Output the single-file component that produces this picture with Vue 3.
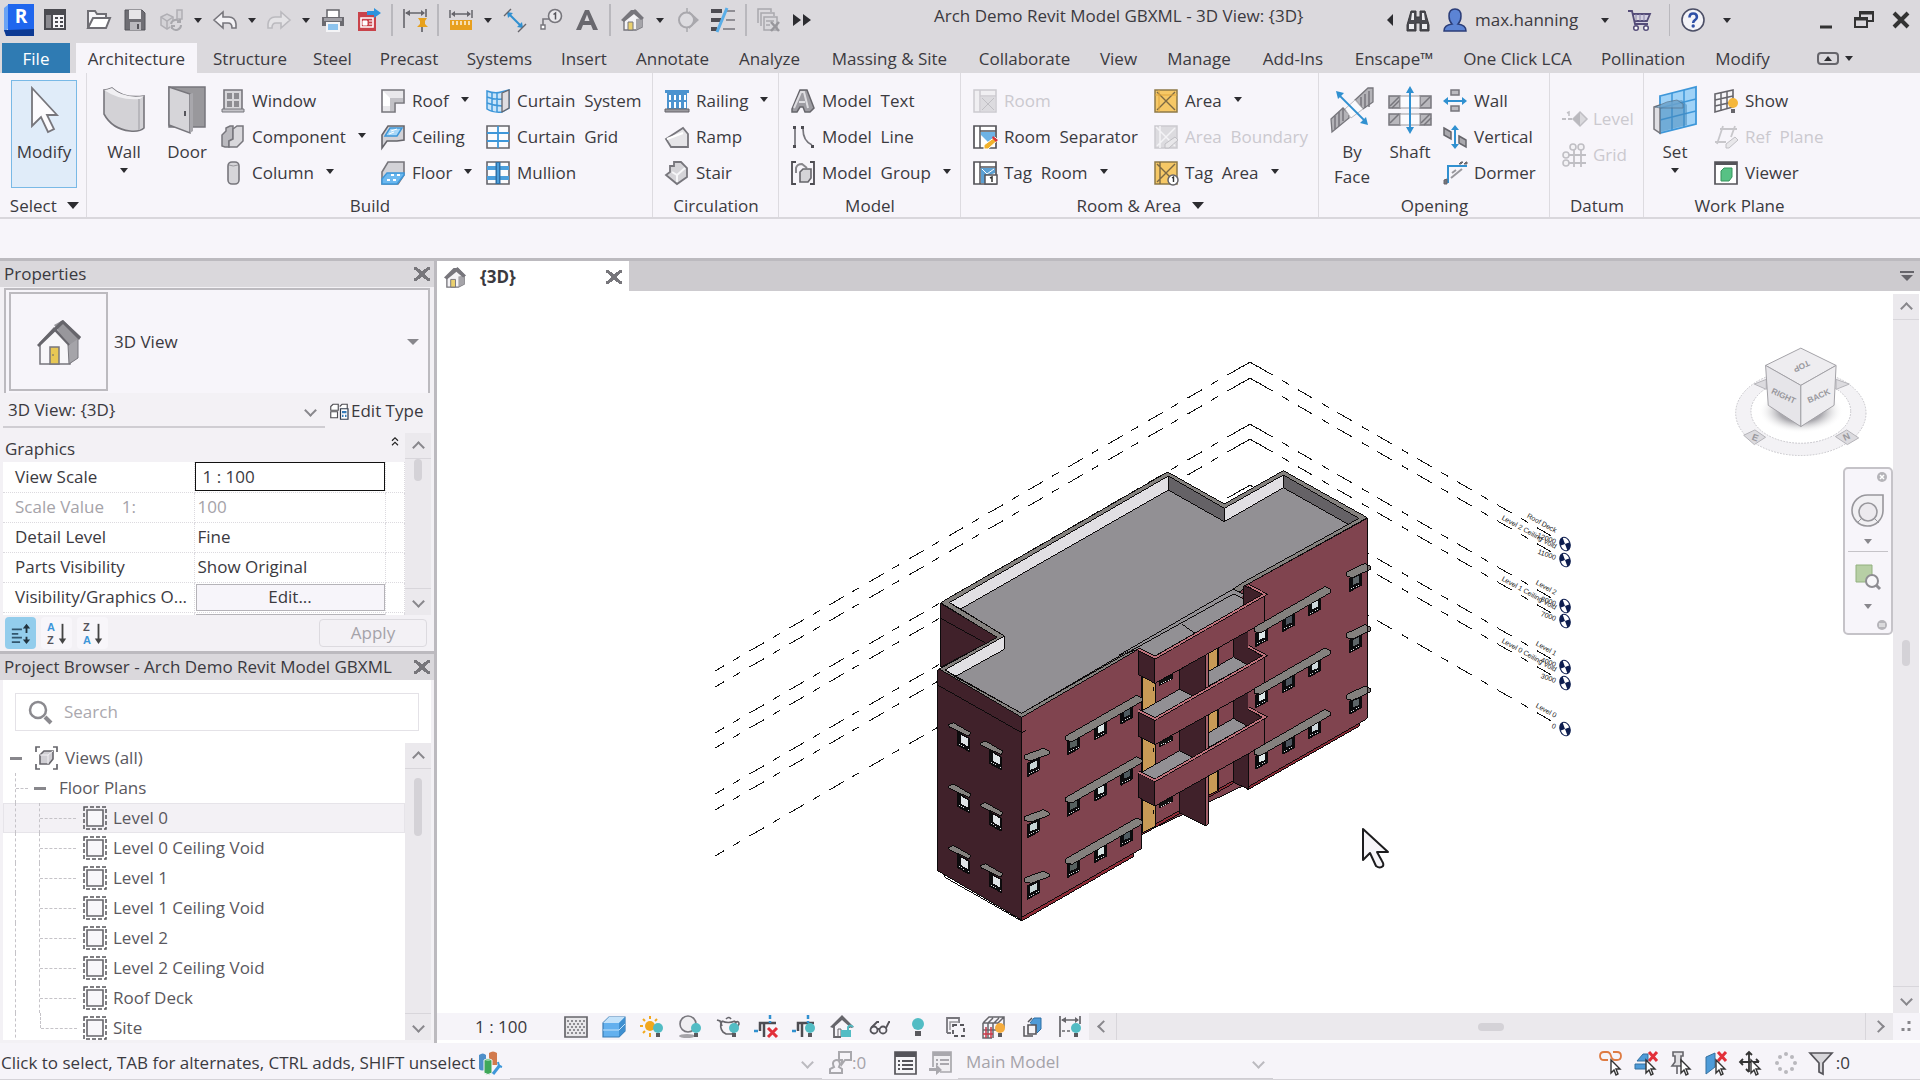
<script setup>
import { ref } from 'vue'

const icons = {
    ui: '<path d="M2 2h20v19H2z" fill="#f6f5f8" stroke="#4a4a50" stroke-width="2"/><path d="M2 2h20v5H2z" fill="#4a4a50"/><path d="M3 7h6v13H3z" fill="#8b8a90"/><path d="M9 7v14M12 10h3m2 0h3M12 14h3m2 0h3M12 18h3m2 0h3" stroke="#4a4a50" stroke-width="2"/>',
    open: '<path d="M1 20V3h7l2 3h9v5" fill="#f6f5f8" stroke="#6f6e74" stroke-width="2"/><path d="M1 20l5-10h17l-4 10z" fill="#fff" stroke="#6f6e74" stroke-width="2"/>',
    save: '<path d="M2 2h17l3 3v17H2z" fill="#6f6e74" stroke="#55545a"/><path d="M6 2h12v9H6z" fill="#e6e5e8"/><path d="M7 14h11v8H7z" fill="#b9b8bd"/><path d="M14 16h2v5h-2z" fill="#55545a"/>',
    sync: '<g fill="#d4d3d7" stroke="#b0afb4" stroke-width="1.5"><path d="M2 9l6-3 6 3v8l-6 4-6-4z"/><path d="M2 9l6 4 6-4M8 13v8"/><path d="M18 2h5v9h-5z"/></g><circle cx="17" cy="17" r="6" fill="#dbd9dd"/><path d="M12 16a5 5 0 019-2m1 3a5 5 0 01-9 3m8-9v3h-3m-5 7v-3h3" fill="none" stroke="#a9a8ad" stroke-width="2"/>',
    undo: '<path d="M1 12l9-8v5h6q6 0 7 7v4h-4q0-5-4-5h-5v5z" fill="#f3f2f5" stroke="#77767c" stroke-width="1.6"/>',
    redo: '<path d="M23 12l-9-8v5H8q-6 0-7 7v4h4q0-5 4-5h5v5z" fill="#e4e3e6" stroke="#bbbabf" stroke-width="1.6"/>',
    print: '<path d="M6 2h12v8H6z" fill="#fff" stroke="#66656b" stroke-width="1.5"/><path d="M1 9h22v9H1z" fill="#6b6a70"/><path d="M3 10h18v3H3z" fill="#a2a1a7"/><path d="M6 15h12v8H6z" fill="#8cc3ee" stroke="#f4f4f6" stroke-width="2"/>',
    pdf: '<path d="M1 4h18v19H1z" fill="#c9434a"/><path d="M4 10h12v9H4z" fill="none" stroke="#fff" stroke-width="1.6"/><path d="M6 13h4v4H6zM12 13h3M12 16h3" fill="#fff" stroke="#fff"/><path d="M10 3h7V0l7 5-7 5V7h-7z" fill="#2e93dc"/>',
    pinDim: '<path d="M1 1v19M23 1v8M3 5h18" stroke="#66656b" stroke-width="1.6"/><path d="M7 2L2 5l5 3zM18 2l4 3-4 3z" fill="#66656b"/><path d="M15 10h9l-2 3v3l3 3H14l3-3v-3z" fill="#e7a11c"/><path d="M19 19v5" stroke="#55545a" stroke-width="1.5"/>',
    measure: '<path d="M1 2v8M23 2v8M3 6h18" stroke="#66656b" stroke-width="1.5"/><path d="M6 3L2 6l4 3zM18 3l4 3-4 3z" fill="#66656b"/><path d="M1 12h22v10H1z" fill="#e8a01f"/><path d="M4 13v4m4-4v4m4-4v4m4-4v4m4-4v4" stroke="#fff" stroke-width="1.3"/>',
    alignDim: '<path d="M5 5l14 14" stroke="#3090d0" stroke-width="2"/><path d="M4 4l6 1-5 5zM20 20l-6-1 5-5z" fill="#3090d0"/><path d="M1 8l7-7M15 24l8-8" stroke="#66656b" stroke-width="1.4"/>',
    tag: '<circle cx="16" cy="8" r="6.5" fill="#eae9ec" stroke="#77767c" stroke-width="1.6"/><path d="M14.500 6.500l2-1.500v6.500" fill="none" stroke="#55545a" stroke-width="1.5"/><path d="M10 11H4v7" fill="none" stroke="#77767c" stroke-width="1.6"/><path d="M2 17h4v4H2z" fill="#fff" stroke="#77767c" stroke-width="1.4"/>',
    letterA: '<path d="M1 22L10 2h4l9 20h-5l-2-5H8l-2 5zM9.500 13h5L12 6.500z" fill="#69686e"/>',
    house: '<path d="M3 12v10h12l6-3V10l-7-8z" fill="#f4f3f6" stroke="#77767c" stroke-width="1.400"/><path d="M15 22V11l6-1v9z" fill="#a5a4a9"/><path d="M0 12L10 2h5l8 8-3 2-6-5-1-1-10 8z" fill="#77767c"/><path d="M7 14h5v8H7z" fill="#ead06f" stroke="#77767c"/>',
    section: '<path d="M12 0v24" stroke="#a9a8ad" stroke-width="1.5"/><path d="M14 3l10 9-10 9z" fill="#a9a8ad"/><circle cx="11.500" cy="12" r="7.500" fill="#dddce0" stroke="#a9a8ad" stroke-width="2"/>',
    thin: '<path d="M0 3h11M0 12h10M0 21h6" stroke="#4d4c52" stroke-width="4"/><path d="M16 3h8M15 12h9M12 21h12" stroke="#77767c" stroke-width="1.4"/><path d="M16 0L6 24" stroke="#5aaee8" stroke-width="3"/>',
    closeWin: '<path d="M1 15V1h13v3M4 18V5h13v3" fill="none" stroke="#a9a8ad" stroke-width="1.5"/><path d="M7 9h13v13H7z" fill="#d9d8dc" stroke="#a9a8ad" stroke-width="1.5"/><path d="M9 13h8M9 17h4" stroke="#a9a8ad" stroke-width="1.5"/><path d="M14 14l8 9m0-9l-8 9" stroke="#98979c" stroke-width="2.500"/>',
    more: '<path d="M0 6l8 6-8 6zM10 6l8 6-8 6z" fill="#2c2c30"/>',
    binoculars: '<path d="M5 3h5v6h4V3h5l4 14v6h-9v-8h-4v8H1v-6z" fill="#4a4a50" stroke="#3a3a3e" /><path d="M3 16h5v5H3zM16 16h5v5h-5zM6 5h2v7H5zM16 5h2l1 7h-3z" fill="#ededf0"/>',
    user: '<path d="M1 23q0-6 8-7-3-3-3-8 0-7 6-7t6 7q0 5-3 8 8 1 8 7z" fill="#5c84d4" stroke="#2b3d78" stroke-width="1.500"/>',
    cart: '<path d="M1 3h4l3 13h13M6 6h17l-3 7H8" fill="#d3d0e2" stroke="#544c78" stroke-width="1.8"/><path d="M9 6v7m4-7v7m4-7v7" stroke="#8c86ab"/><circle cx="9" cy="20" r="2.300" fill="#fff" stroke="#544c78" stroke-width="1.500"/><circle cx="19" cy="20" r="2.300" fill="#fff" stroke="#544c78" stroke-width="1.500"/>',
    help: '<circle cx="12" cy="12" r="11" fill="#f3f3f8" stroke="#4c4f66" stroke-width="1.600"/><path d="M8.500 9.500q0-4 3.700-4t3.700 3.500q0 2-2 3.200-1.700 1-1.700 2.800" fill="none" stroke="#2e4fa6" stroke-width="2.600"/><circle cx="12.200" cy="18" r="1.700" fill="#2e4fa6"/>',
    window: '<path d="M3 1h18v20H3z" fill="#d8d7db" stroke="#77767c" stroke-width="1.600"/><path d="M6 4h5v6H6zm7 0h5v6h-5zM6 12h5v6H6zm7 0h5v6h-5z" fill="#8e8d92"/><path d="M1 20h22v3H1z" fill="#c4c3c8" stroke="#77767c"/>',
    component: '<path d="M1 21V10l4-4V3l4-2h3v13l-4 2v6H4z" fill="#bbbabf" stroke="#77767c" stroke-width="1.500"/><path d="M12 14V4l4-3h6v15l-6 6H8v-6z" fill="#d9d8dc" stroke="#77767c" stroke-width="1.500"/>',
    column: '<rect x="7" y="1" width="11" height="22" rx="4" fill="#d6d5d9" stroke="#77767c" stroke-width="1.600"/><path d="M8 4q4 2 9 0" fill="none" stroke="#98979c"/>',
    roof: '<path d="M1 1h22v13h-9v9H1z" fill="#e9e8eb"/><path d="M1 1l8 8v8h-8zM23 1L9 9" fill="#fff"/><path d="M11 22V11h11" fill="none" stroke="#c2c1c6" stroke-width="4"/><path d="M1 1h22v13h-9v9H1z" fill="none" stroke="#77767c" stroke-width="1.600"/>',
    ceiling: '<path d="M7 1h16v14l-7 1H6l-5 7V10z" fill="#d3d2d7" stroke="#66656b" stroke-width="1.600"/><path d="M9 3h12l-5 8H4z" fill="#a9d8f8" stroke="#3e97d9" stroke-width="1.500"/><path d="M10 6l6-2M8 9l5-2" stroke="#fff"/>',
    floor: '<path d="M7 1h16v13l-6 9H1V11z" fill="#d3d2d7" stroke="#77767c" stroke-width="1.600"/><path d="M6 12h17v2l-7 9H1v-5z" fill="#6cb8ef" stroke="#3e97d9" stroke-width="1.500"/><path d="M10 14h3m3 0h3M6 19h3m3 0h3" stroke="#fff" stroke-width="2"/>',
    curtainSystem: '<path d="M1 2q8 3 14 1l8-2v18l-7 4q-9 1-15-3z" fill="#c9e5fa" stroke="#3e97d9" stroke-width="1.500"/><path d="M6 4v18M11 4v19M1 8q8 3 15 2M1 14q8 3 15 3" fill="none" stroke="#3e97d9" stroke-width="1.500"/><path d="M16 4l7-3v18l-7 4z" fill="#dedde1" stroke="#66656b" stroke-width="1.300"/>',
    curtainGrid: '<path d="M1 1h22v22H1z" fill="#fbfbfd" stroke="#66656b" stroke-width="1.600"/><path d="M12 1v22M1 8h22M1 16h22" stroke="#3e97d9" stroke-width="1.800"/>',
    mullion: '<path d="M1 1h22v22H1z" fill="#fbfbfd" stroke="#66656b" stroke-width="1.600"/><path d="M1 7h22M1 17h22" stroke="#4b9fdc" stroke-width="4"/><path d="M12 1v22" stroke="#2f6fa5" stroke-width="5"/><path d="M12 2v20" stroke="#4b9fdc" stroke-width="2"/>',
    railing: '<path d="M0 1h24v3H0zM2 4h20v16H2z" fill="#4b93cf"/><path d="M4 6h2v5H4zm5 0h2v5H9zm5 0h2v5h-2zm5 0h2v5h-2zM4 13h2v6H4zm5 0h2v6H9zm5 0h2v6h-2zm5 0h2v6h-2z" fill="#fff"/><path d="M0 20h24v3H0z" fill="#99989d" stroke="#66656b"/>',
    ramp: '<path d="M1 14L18 3l5 6v13H6z" fill="#e6e5e8" stroke="#77767c" stroke-width="1.800"/><path d="M2 14l16-6" stroke="#fff" stroke-width="2"/>',
    stair: '<path d="M5 5h4V1h7l6 6v9l-10 7-11-9 4-3z" fill="#d5d4d8" stroke="#77767c" stroke-width="1.800"/><path d="M7 11l5 3 8-7M12 14v7" fill="none" stroke="#f6f6f8" stroke-width="2"/>',
    modelText: '<path d="M1 20L9 1h7l7 18-4 4h-5l-2-5H9l-3 5H1z" fill="#9d9ca2" stroke="#66656b" stroke-width="1.500"/><path d="M3 19l7-16h3l4 16M8 13h6" fill="none" stroke="#dedde1" stroke-width="2"/>',
    modelLine: '<path d="M4 4v16M12 4q0 12 9 16" fill="none" stroke="#77767c" stroke-width="1.700"/><path d="M2 1h3v3H2zM10 1h3v3h-3zM2 20h3v3H2zM20 20h3v3h-3z" fill="#4d4c52"/>',
    modelGroup: '<path d="M5 1H1v22h4M19 1h4v22h-4" fill="none" stroke="#4d4c52" stroke-width="1.800"/><path d="M5 12V7q1-4 6-4l5 4" fill="none" stroke="#88878c" stroke-width="2"/><path d="M9 11l3-3h8v9l-3 4H9z" fill="#d5d4d8" stroke="#66656b" stroke-width="1.600"/>',
    roomOff: '<path d="M1 1h22v22H1z" fill="#f0eff2" stroke="#cbcacf" stroke-width="1.500"/><path d="M7 1v22M7 7h16" stroke="#cbcacf" stroke-width="1.500"/><path d="M8 8h14v14H8z" fill="#dcdbdf"/><path d="M9 9l12 12M21 9L9 21" stroke="#c0bfc4"/>',
    roomSep: '<path d="M1 1h22v22H1z" fill="#fff" stroke="#55545a" stroke-width="1.700"/><path d="M7 1v22M7 6h16" stroke="#55545a" stroke-width="1.500"/><path d="M8 7h14v6l-6 5-8-8z" fill="#6db3e6"/><path d="M22 12l3 3-10 9h-4v-4z" fill="#f1b12d" stroke="#fff"/><path d="M20 11l5 4-2 2-4-4z" fill="#d9343b"/>',
    tagRoom: '<path d="M1 1h22v22H1z" fill="#fff" stroke="#55545a" stroke-width="1.700"/><path d="M7 1v22M7 6h16" stroke="#55545a" stroke-width="1.500"/><path d="M8 7h14v5l-8 3v7H8z" fill="#5b9fd2"/><path d="M9 8l5 5 7-5" stroke="#fff" fill="none"/><path d="M12 14h12v9H12z" fill="#fff" stroke="#55545a" stroke-width="1.500"/><path d="M17 17l2-1v5" fill="none" stroke="#333" stroke-width="1.500"/>',
    area: '<path d="M1 1h22v22H1z" fill="#f6c866" stroke="#8f7a48" stroke-width="1.500"/><path d="M3 3l18 18M21 3L3 21" stroke="#7d6a45" stroke-width="1.400"/><path d="M5 1v22M1 6h22" stroke="#e0a63c"/>',
    areaOff: '<path d="M1 1h22v22H1z" fill="#dcdbdf" stroke="#cbcacf" stroke-width="1.500"/><path d="M2 2l19 19M21 3L3 21M6 1v22" stroke="#f4f3f6" stroke-width="1.500"/><path d="M21 12l3 3-9 8h-4v-4z" fill="#e8e7ea" stroke="#c0bfc4"/>',
    tagArea: '<path d="M1 1h22v22H1z" fill="#f6c866" stroke="#8f7a48" stroke-width="1.500"/><path d="M3 3l18 18M21 3L3 21M6 1v22" stroke="#7d6a45" stroke-width="1.400"/><circle cx="19" cy="19" r="5" fill="#fff" stroke="#66656b" stroke-width="1.500"/><path d="M18 17l1.500-1v5" fill="none" stroke="#333" stroke-width="1.400"/>',
    openWall: '<path d="M8 1h8v5H8zM8 17h8v5H8z" fill="#bcbbc0" stroke="#77767c" stroke-width="1.500"/><path d="M3 12h18" stroke="#3090d0" stroke-width="2"/><path d="M0 12l5-4v8zM24 12l-5-4v8z" fill="#3090d0"/>',
    openVertical: '<path d="M1 3l7 4v7l-7-4zM16 11l7 4v7l-7-4z" fill="#a9a8ad" stroke="#66656b" stroke-width="1.500"/><path d="M12 3v18" stroke="#3090d0" stroke-width="2"/><path d="M12 0l4 5H8zM12 24l4-5H8z" fill="#3090d0"/>',
    dormer: '<path d="M5 22V5h19" fill="none" stroke="#3090d0" stroke-width="2"/><path d="M1 19v4h3v-5zM16 3l2-2h2l-2 2zM21 3l2-2h1v2z" fill="#77767c" stroke="#66656b"/><path d="M8 17L19 8M9 12l4-3" stroke="#99989d" stroke-width="2"/>',
    level: '<path d="M0 12h4m2 0h4" stroke="#c0bfc4" stroke-width="2"/><path d="M5 6l2-1v4" fill="none" stroke="#c0bfc4" stroke-width="1.500"/><path d="M18 5l7 7-7 7-7-7z" fill="#dad9dd" stroke="#c0bfc4" stroke-width="1.500"/><path d="M18 5v14l-7-7z" fill="#bab9be"/>',
    grid: '<path d="M7 12h17M7 20h17M12 7v17M19 7v17" stroke="#c0bfc4" stroke-width="1.800"/><g fill="#f3f2f5" stroke="#c0bfc4" stroke-width="1.600"><circle cx="11" cy="4" r="3"/><circle cx="19" cy="4" r="3"/><circle cx="4" cy="12" r="3"/><circle cx="4" cy="20" r="3"/></g>',
    show: '<path d="M1 5l18-4v17L1 23z" fill="#f6f5f8" stroke="#66656b" stroke-width="1.600"/><path d="M7 3v19M13 2v18M1 11l18-4M1 17l18-4" stroke="#66656b" stroke-width="1.500"/><circle cx="19" cy="14" r="5" fill="#f5b73c"/><path d="M17 20h4v4h-4z" fill="#66656b"/>',
    refPlane: '<path d="M6 4h17M9 1L3 19M21 1l-4 11M1 17h11" fill="none" stroke="#c8c7cb" stroke-width="1.800"/><path d="M21 12l3 3-9 8h-3v-4z" fill="#e8e7ea" stroke="#c0bfc4"/>',
    viewer: '<path d="M1 1h22v22H1z" fill="#fff" stroke="#55545a" stroke-width="1.700"/><path d="M1 1h22v3H1z" fill="#55545a"/><path d="M7 10l3-3h8v9l-3 4H7z" fill="#57c184" stroke="#36935d"/>',
    editType: '<path d="M1 6l3-3h7v8H1zM13 6l3-3h7v8M1 13h9v8H1z" fill="#fff" stroke="#4d4c52" stroke-width="1.500"/><path d="M14 9h10v14H14z" fill="#fff" stroke="#2f3a4a" stroke-width="1.600"/><path d="M16 12h6v3h-6zM16 17h2v3h-2zm4 0h2v3h-2z" fill="#347ab8"/>',
    group: '<path d="M2 8h11M2 13h7M2 17h11M2 22h9" stroke="#33566d" stroke-width="2"/><path d="M18 6v6M18 16v5" stroke="#22333f" stroke-width="2"/><path d="M18 2l4 5h-8zM18 24l4-5h-8z" fill="#22333f"/>',
    grain: '<path d="M1 2h22v20H1z" fill="#e8e7ea" stroke="#66656b" stroke-width="1.700"/><path d="M3 5h2v2H3zm4 0h2v2H7zm4 0h2v2h-2zm4 0h2v2h-2zm4 0h2v2h-2zM5 8h2v2H5zm4 0h2v2H9zm4 0h2v2h-2zm4 0h2v2h-2zM3 11h2v2H3zm4 0h2v2H7zm4 0h2v2h-2zm4 0h2v2h-2zm4 0h2v2h-2zM5 14h2v2H5zm4 0h2v2H9zm4 0h2v2h-2zm4 0h2v2h-2zM3 17h2v2H3zm4 0h2v2H7zm4 0h2v2h-2zm4 0h2v2h-2zm4 0h2v2h-2z" fill="#8e8d92"/>',
    style: '<path d="M1 8l6-6h16v14l-6 6H1z" fill="#63b0ee" stroke="#3a7cb5" stroke-width="1.200"/><path d="M1 8l6-6h16l-6 6z" fill="#c3e2fa"/><path d="M17 8l6-6v14l-6 6z" fill="#3f8fd0"/><path d="M1 15h16l6-6" fill="none" stroke="#c3e2fa"/>',
    sun: '<circle cx="10" cy="11" r="5" fill="#f2a81d"/><path d="M10 1v3M10 18v4M0 11h3M3 4l2 2M17 4l-2 2M3 18l2-2" stroke="#f2a81d" stroke-width="2"/>',
    shadow: '<ellipse cx="9" cy="21" rx="8" ry="2" fill="#a5a4a9"/><circle cx="10" cy="9" r="8" fill="#efeef1" stroke="#77767c" stroke-width="1.600"/>',
    teapot: '<path d="M6 6q-3 6 1 11l3 2h6q4-3 4-9l-1-4M6 6q6 3 13 0M10 4q3-3 5 0M6 11L4 6 1 5M19 8q4-3 4 1l-3 5" fill="none" stroke="#66656b" stroke-width="1.700"/>',
    crop: '<path d="M6 16V8h16M10 8v14" fill="none" stroke="#4d4c52" stroke-width="2.500"/><path d="M16 0v4M0 16h4M16 6v2" stroke="#3090d0" stroke-width="2.500"/>',
    redX: '<path d="M14 13l9 9m0-9l-9 9" stroke="#e2303a" stroke-width="3"/>',
    bulb: '<circle cx="18" cy="13" r="5" fill="#52bcc4"/><path d="M16 18h4v4h-4z" fill="#5a595e"/>',
    orangeBulb: '<circle cx="18" cy="13" r="5" fill="#f5ac3d"/><path d="M16 18h4v4h-4z" fill="#5a595e"/>',
    lockHouse: '<path d="M4 11v11h7M19 10v3" fill="none" stroke="#66656b" stroke-width="1.800"/><path d="M8 14h3v8H8z" fill="none" stroke="#66656b"/><path d="M0 12L12 0l12 12-3 1-9-8-9 8z" fill="#66656b"/><path d="M11 15h10v7H11z" fill="#52bcc4"/><path d="M18 15v-3q2-3 5 0" fill="none" stroke="#52bcc4" stroke-width="2"/>',
    glasses: '<g fill="none" stroke="#55545a" stroke-width="1.800"><circle cx="6" cy="15" r="3.500"/><circle cx="15" cy="15" r="3.500"/><path d="M9 14h3M3 13l6-6h2M18 13l3-6h1"/></g>',
    bigBulb: '<circle cx="12" cy="9" r="6" fill="#52bcc4"/><path d="M9 16h6v5H9z" fill="#5a595e"/>',
    displaced: '<path d="M3 18V3h12v5M3 18h4" fill="none" stroke="#77767c" stroke-width="1.800"/><path d="M6 15V7h9" fill="none" stroke="#99989d" stroke-width="1.500"/><path d="M9 10h11v11H9z" fill="none" stroke="#55545a" stroke-width="1.800" stroke-dasharray="4 3"/>',
    gridBulb: '<path d="M1 8l6-6h15v11M1 8v15h9M1 8h15l6-6M6 8v15M11 8v15M1 15h15M16 8v6M11 3l-5 5M17 3l-5 5" fill="none" stroke="#66656b" stroke-width="1.500"/><path d="M4 12v11M9 12v11M1 19h10" stroke="#c8394a" stroke-width="1.500"/>',
    highlight: '<path d="M10 8l4-5h7v11l-4 4" fill="#4e9bd8" stroke="#2c6ea5"/><path d="M8 10h8v9H8z" fill="#f4f3f6" stroke="#55545a" stroke-width="1.600"/><path d="M4 11v10h9M8 7l4-4" fill="none" stroke="#55545a" stroke-width="1.500"/>',
    constraint: '<path d="M2 1v21M22 1v8M4 5h16" stroke="#66656b" stroke-width="1.700"/><path d="M8 2L3 5l5 3zM17 2l4 3-4 3z" fill="#66656b"/><path d="M4 16h10" stroke="#66656b" stroke-width="1.700" stroke-dasharray="3 2"/>',
    worksets: '<path d="M1 4q4-3 7 0v14q-4 3-7 0z" fill="#4e8fc9"/><path d="M11 2q4-3 8 0v12h-8z" fill="#d27a4d"/><path d="M6 9q4-3 8 0v13q-4 3-8 0z" fill="#3fa85a" stroke="#f6f4f9"/><path d="M7 9q3-2 6 0-3 2-6 0z" fill="#8fd3a2"/><path d="M22 14l-7 9" stroke="#3e97d9" stroke-width="3"/><path d="M20 11l1 4 3 1" fill="none" stroke="#3e97d9" stroke-width="2"/>',
    requests: '<path d="M11 1h12v8h-6l-3 4V9h-3zM2 22v-4l4-2q-2-4 0-6 3-2 5 0 2 3 0 6l3 2v4z" fill="none" stroke="#a9a8ad" stroke-width="2"/>',
    list: '<path d="M2 1h21v22H2z" fill="#f6f5f8" stroke="#55545a" stroke-width="1.700"/><path d="M2 1h21v5H2z" fill="#55545a"/><path d="M5 10h2m2 0h11M5 14h2m2 0h11M5 18h2m2 0h11" stroke="#55545a" stroke-width="2"/>',
    listOff: '<path d="M5 16V1h18v20H12" fill="#f0eff2" stroke="#a9a8ad" stroke-width="1.700"/><path d="M5 1h18v4H5z" fill="#a9a8ad"/><path d="M8 9h2m2 0h9M8 13h2m2 0h9" stroke="#a9a8ad" stroke-width="2"/><path d="M1 17h7v-4l6 6-6 5v-4H1z" fill="#a9a8ad"/>',
    selLink: '<path d="M9 9H5q-4 0-4-4t4-4h3q3 0 4 4t4 4h2q4 0 4-4t-4-4h-4" fill="none" stroke="#de7b42" stroke-width="1.800"/>',
    selUnder: '<path d="M3 10l6-7h5v7zM1 13h14v5H1z" fill="#4e9bd8" stroke="#35719f"/><path d="M15 1l8 9m0-9l-8 9" stroke="#e2303a" stroke-width="3"/>',
    selPin: '<path d="M4 1h10v4h-2v6l3 4H3l3-4V5H4zM8 15v8" fill="#e0dfe3" stroke="#66656b" stroke-width="1.600"/>',
    selFace: '<path d="M2 6l9-4v14l-9 7z" fill="#4e9bd8" stroke="#35719f"/><path d="M14 1l8 9m0-9l-8 9" stroke="#e2303a" stroke-width="3"/>',
    selDrag: '<path d="M10 1v20M1 11h19M7 4l3-3 3 3M7 18l3 3M4 8l-3 3 3 3M17 8l3 3" fill="none" stroke="#333" stroke-width="1.800"/>',
    pointer: '<path d="M12 9v13l3-3 2 5 2-1-2-5h4z" fill="#fff" stroke="#333" stroke-width="1.400"/>',
    spinner: '<g fill="#b9b8bd"><circle cx="12" cy="3" r="2"/><circle cx="18" cy="6" r="2"/><circle cx="21" cy="12" r="2"/><circle cx="18" cy="18" r="2"/><circle cx="12" cy="21" r="2"/><circle cx="6" cy="18" r="2"/><circle cx="3" cy="12" r="2"/><circle cx="6" cy="6" r="2"/></g>',
    filter: '<path d="M1 2h22l-9 10v11l-4-2v-9z" fill="#d8d7db" stroke="#55545a" stroke-width="1.700"/>',
    views: '<path d="M5 1H1v5M18 1h4v5M5 23H1v-5M18 23h4v-5" fill="none" stroke="#66656b" stroke-width="1.700"/><path d="M5 9l4-4h9v8l-4 5H5z" fill="#d0cfd4" stroke="#66656b" stroke-width="1.600"/><path d="M5 9h8v9M13 9l5-4" fill="none" stroke="#f3f2f5"/>',
    plan: '<path d="M1 1h22v22H1z" fill="none" stroke="#55545a" stroke-width="1.500" stroke-dasharray="4 2"/><path d="M4 4h16v16H4z" fill="#f8f7fa" stroke="#66656b" stroke-width="1.600"/>',
    search: '<circle cx="10" cy="10" r="8" fill="none" stroke="#8b8a8f" stroke-width="2.500"/><path d="M17 17l6 6" stroke="#8b8a8f" stroke-width="4"/>',
}

const bigIcons = {
    modify: '<path d="M10 2v38l9-9 7 15 6-3-7-14h10z" fill="#fcfbfe" stroke="#77767c" stroke-width="1.800"/>',
    wall: '<path d="M2 4q3 0 8-2 12 11 32 8v32q-4 4-14 3Q10 43 2 28z" fill="#d3d2d6" stroke="#77767c" stroke-width="1.600"/><path d="M2 4q3 0 8-2 12 11 32 8l-4 3Q18 15 2 4z" fill="#f1f0f3"/><path d="M37 13v31" stroke="#b8b7bc" stroke-width="2"/>',
    door: '<path d="M4 1h36v40H4z" fill="#99989c" stroke="#77767c" stroke-width="1.500"/><path d="M4 1l21 7v39L4 39z" fill="#d6d5d9" stroke="#77767c" stroke-width="1.500"/><path d="M25 8l3-1v38l-3 2z" fill="#a8a7ac"/><path d="M20 25v5" stroke="#55545a" stroke-width="2"/>',
    byFace: '<path d="M1 33l12-11 6 6v4L2 46zM25 14L38 2h5v14L33 23z" fill="#b4b3b8" stroke="#77767c" stroke-width="1.300"/><path d="M5 30v13m4-17v14m4-17v12m18-24v11m4-14v14m4-17v16" stroke="#77767c" stroke-width="1.500"/><path d="M15 23l10-9 8 9-12 9z" fill="#fbfafd" stroke="#bbbabf"/><path d="M8 8l28 28" stroke="#3090d0" stroke-width="1.800"/><path d="M6 5l8 2-6 6zM38 39l-8-2 6-6z" fill="#3090d0"/>',
    shaft: '<g fill="#b9b8bd" stroke="#77767c" stroke-width="1.500"><path d="M1 10h11v12H1zM32 10h11v12H32zM1 28h11v11H1zM32 28h11v11H32z"/><path d="M2 20L11 11M4 22l8-8M33 20l9-9M2 37l9-9M33 37l9-9M36 39l7-7"/></g><path d="M12 10h20v12H12zM12 28h20v11H12z" fill="#fbfafd" stroke="#99989d"/><path d="M22 4v40" stroke="#3090d0" stroke-width="2"/><path d="M22 0l4 7h-8zM22 48l4-7h-8z" fill="#3090d0"/>',
    setPlane: '<path d="M7 10l36-9v37L7 47z" fill="#9fd2f7" stroke="#3e97d9" stroke-width="1.800"/><path d="M19 7v37M31 4v37M7 22l36-9M7 34l36-9" stroke="#3e97d9" stroke-width="1.500"/><path d="M1 21l6-2v28l-6-4z" fill="#dfdee3" stroke="#77767c" stroke-width="1.500"/><path d="M7 19l12-4 10-1 5 5v20L7 46z" fill="#4485b8" opacity=".5"/><path d="M2 21l12-5 10-2 6 4v4H7z" fill="#73a8d0" stroke="#55718a" opacity=".7"/>',
}

const quickAccess = [
    ['open', 'save', 'sync'], '▾', ['undo'], '▾', ['redo'], '▾', ['print', 'pdf'], '|',
    ['pinDim'], '|', ['measure'], '▾', ['alignDim', 'tag', 'letterA'], '|',
    ['house'], '▾', ['section', 'thin'], '|', ['closeWin', 'more'],
].flat()

const tabs = [
    ['Structure', 98], ['Steel', 67], ['Precast', 86], ['Systems', 95], ['Insert', 74],
    ['Annotate', 103], ['Analyze', 91], ['Massing & Site', 149], ['Collaborate', 121],
    ['View', 67], ['Manage', 94], ['Add-Ins', 94], ['Enscape™', 108], ['One Click LCA', 139],
    ['Pollination', 112], ['Modify', 87],
]

// cols are the widths of the columns in the panel, big buttons first
const panels = [
    {
        name: 'Build', width: 566, cols: '74px 52px 168px 105px 1fr',
        big: [{ icon: 'wall', label: 'Wall', drop: true }, { icon: 'door', label: 'Door' }],
        small: [
            [['window', 'Window'], ['component', 'Component', 1], ['column', 'Column', 1]],
            [['roof', 'Roof', 1], ['ceiling', 'Ceiling'], ['floor', 'Floor', 1]],
            [['curtainSystem', 'Curtain  System'], ['curtainGrid', 'Curtain  Grid'], ['mullion', 'Mullion']],
        ],
    },
    {
        name: 'Circulation', width: 126, cols: '1fr', big: [],
        small: [[['railing', 'Railing', 1], ['ramp', 'Ramp'], ['stair', 'Stair']]],
    },
    {
        name: 'Model', width: 182, cols: '1fr', big: [],
        small: [[['modelText', 'Model  Text'], ['modelLine', 'Model  Line'], ['modelGroup', 'Model  Group', 1]]],
    },
    {
        name: 'Room & Area', width: 358, cols: '193px 1fr', big: [], drop: true,
        small: [
            [['roomOff', 'Room', 0, 1], ['roomSep', 'Room  Separator'], ['tagRoom', 'Tag  Room', 1]],
            [['area', 'Area', 1], ['areaOff', 'Area  Boundary', 0, 1], ['tagArea', 'Tag  Area', 1]],
        ],
    },
    {
        name: 'Opening', width: 231, cols: '66px 50px 1fr',
        big: [{ icon: 'byFace', label: 'By Face' }, { icon: 'shaft', label: 'Shaft' }],
        small: [[['openWall', 'Wall'], ['openVertical', 'Vertical'], ['dormer', 'Dormer']]],
    },
    {
        name: 'Datum', width: 94, cols: '1fr', big: [],
        small: [[['level', 'Level', 0, 1], ['grid', 'Grid', 0, 1]]],
    },
    {
        name: 'Work Plane', width: 190, cols: '62px 1fr',
        big: [{ icon: 'setPlane', label: 'Set', drop: true }],
        small: [[['show', 'Show'], ['refPlane', 'Ref  Plane', 0, 1], ['viewer', 'Viewer']]],
    },
]

const viewScale = ref('1 : 100')
const search = ref('')

const floorPlans = ['Level 0', 'Level 0 Ceiling Void', 'Level 1', 'Level 1 Ceiling Void',
    'Level 2', 'Level 2 Ceiling Void', 'Roof Deck', 'Site']
const selectedPlan = ref('Level 0')

const viewControls = [['grain'], ['style'], ['sun', 'bulb'], ['shadow', 'bulb'], ['teapot', 'bulb'],
    ['crop', 'redX'], ['crop', 'bulb'], ['lockHouse'], ['glasses'], ['bigBulb'], ['displaced'],
    ['gridBulb', 'orangeBulb'], ['highlight'], ['constraint', 'bulb']]

const selectionTools = [['selLink', 'pointer'], ['selUnder', 'pointer'], ['selPin', 'pointer'],
    ['selFace', 'pointer'], ['selDrag', 'pointer'], ['spinner'], ['filter']]

const levels = [
    { name: 'Roof Deck', value: '12000', y: 362 },
    { name: 'Level 2 Ceiling Void', value: '11000', y: 378 },
    { name: 'Level 2', value: '8000', y: 424 },
    { name: 'Level 1 Ceiling Void', value: '7000', y: 439 },
    { name: 'Level 1', value: '4000', y: 485 },
    { name: 'Level 0 Ceiling Void', value: '3000', y: 501 },
    { name: 'Level 0', value: '0', y: 547 },
]

const storeys = [0, 184, 368]
const awnings = [
    [438, 888, 212, 122],
    [1003, 562, 212, 122],
    [315, 945, 55, 20],
    [1280, 396, 55, 26],
]
const windows = [
    [442, 905, '#56605f'], [524, 860, '#d8e4e4'], [603, 812, '#4f5b60'],
    [1007, 580, '#dfe9ea'], [1088, 535, '#4d555e'], [1166, 488, '#cdd8dc'],
    [322, 970, '#c7d5d6'], [1289, 415, '#5d6568'],
]
const sideWindows = [[112, 875], [208, 930]]

function draw(names) {
    return names.map((n) => icons[n]).join('')
}
</script>

<template>
    <div class="app">
        <header class="titlebar">
            <div class="quick">
                <button class="logo" aria-label="Application menu">
                    <svg viewBox="0 0 32 32">
                        <path d="M0 4l5-4v24l-5 4z" fill="#6aa3f5" />
                        <path d="M4 0h26v26H4z" fill="#1f66ee" />
                        <path d="M0 26h4l26-1v7H2z" fill="#0c3a94" />
                        <text x="17" y="19" text-anchor="middle">R</text>
                    </svg>
                </button>
                <button class="tool first" aria-label="Interface"><svg viewBox="0 0 24 24" v-html="icons.ui"></svg></button>
                <template v-for="(q, i) in quickAccess" :key="i">
                    <button v-if="q === '▾'" class="drop" aria-label="More"><i class="arrow"></i></button>
                    <span v-else-if="q === '|'" class="sep"></span>
                    <button v-else class="tool" :aria-label="q"><svg viewBox="0 0 24 24" v-html="icons[q]"></svg></button>
                </template>
            </div>
            <h1>Arch Demo Revit Model GBXML - 3D View: {3D}</h1>
            <div class="account">
                <i class="arrow left"></i>
                <button class="tool" aria-label="Find"><svg viewBox="0 0 24 24" v-html="icons.binoculars"></svg></button>
                <button class="user">
                    <svg viewBox="0 0 24 24" v-html="icons.user"></svg>
                    <span>max.hanning</span>
                    <i class="arrow"></i>
                </button>
                <button class="tool cart" aria-label="Store"><svg viewBox="0 0 24 24" v-html="icons.cart"></svg></button>
                <span class="sep thin"></span>
                <button class="tool help" aria-label="Help"><svg viewBox="0 0 24 24" v-html="icons.help"></svg></button>
                <button class="drop" aria-label="Help menu"><i class="arrow"></i></button>
            </div>
            <div class="wincontrols">
                <button aria-label="Minimize"><svg viewBox="0 0 20 20"><path d="M4 17h12" stroke="#333" stroke-width="3" /></svg></button>
                <button aria-label="Restore"><svg viewBox="0 0 20 20"><path d="M6 7V2h13v9h-5M1 8h12v9H1z" fill="none" stroke="#333" stroke-width="2" /><path d="M6 3h13M1 9h12" stroke="#333" stroke-width="3" /></svg></button>
                <button aria-label="Close"><svg viewBox="0 0 20 20"><path d="M3 3l14 14M17 3L3 17" stroke="#333" stroke-width="4" /></svg></button>
            </div>
        </header>

        <nav class="tabs">
            <button class="file">File</button>
            <button class="active">Architecture</button>
            <button v-for="t in tabs" :key="t[0]" :style="{ width: t[1] + 'px' }">{{ t[0] }}</button>
            <button class="collapse" aria-label="Minimize ribbon">
                <span class="box"><i class="arrow up"></i></span>
                <i class="arrow"></i>
            </button>
        </nav>

        <section class="ribbon">
            <div class="panel select">
                <div class="panel_body">
                    <button class="big modify">
                        <svg viewBox="0 0 44 48" v-html="bigIcons.modify"></svg>
                        <span>Modify</span>
                    </button>
                </div>
                <div class="panel_name">Select <i class="arrow wide"></i></div>
            </div>
            <div v-for="p in panels" :key="p.name" class="panel" :class="{ last: p.name === 'Work Plane' }" :style="{ width: p.width + 'px' }">
                <div class="panel_body" :style="{ gridTemplateColumns: p.cols }">
                    <button v-for="b in p.big" :key="b.label" class="big">
                        <svg viewBox="0 0 44 48" v-html="bigIcons[b.icon]"></svg>
                        <span>{{ b.label }}</span>
                        <i v-if="b.drop" class="arrow"></i>
                    </button>
                    <div v-for="(col, i) in p.small" :key="i" class="col">
                        <button v-for="s in col" :key="s[1]" :disabled="!!s[3]">
                            <svg viewBox="0 0 24 24" v-html="icons[s[0]]"></svg>
                            <span>{{ s[1] }}</span>
                            <i v-if="s[2]" class="arrow"></i>
                        </button>
                    </div>
                </div>
                <div class="panel_name">{{ p.name }} <i v-if="p.drop" class="arrow wide"></i></div>
            </div>
        </section>
        <div class="options"></div>

        <main>
            <aside>
                <section class="dock">
                    <header class="dock_title">
                        <h2>Properties</h2>
                        <button class="x" aria-label="Close properties"></button>
                    </header>
                    <button class="type">
                        <span class="thumb">
                            <svg viewBox="0 0 46 46">
                                <path d="M4 24v21h30V24L18 9z" fill="#f7f6f9" stroke="#77767c" stroke-width="1.500" />
                                <path d="M32 26l10-8v21l-9 6z" fill="#a5a4a9" stroke="#77767c" />
                                <path d="M18 6l9-5 18 17-12 8z" fill="#98979c" />
                                <path d="M1 26L25 2l2-1 18 17-2 3L27 5 3 28z" fill="#66656b" />
                                <path d="M18 10l15 16" stroke="#66656b" stroke-width="2" />
                                <path d="M14 28h9v17h-9z" fill="#e7c754" stroke="#77767c" stroke-width="1.500" />
                                <path d="M17 35v2" stroke="#66656b" />
                            </svg>
                        </span>
                        <span>3D View</span>
                        <i class="arrow grey"></i>
                    </button>
                    <div class="filter_row">
                        <label class="combo">
                            <select aria-label="Element filter"><option>3D View: {3D}</option></select>
                            <i class="chev down"></i>
                        </label>
                        <button class="edit_type"><svg viewBox="0 0 24 24" v-html="icons.editType"></svg>Edit Type</button>
                    </div>
                    <div class="props">
                        <div class="props_list">
                            <h3>Graphics <svg viewBox="0 0 10 12"><path d="M1 5l4-4 4 4M1 11l4-4 4 4" fill="none" stroke="#222" stroke-width="1.500" /></svg></h3>
                            <table>
                                <tbody>
                                    <tr>
                                        <th><label for="scale">View Scale</label></th>
                                        <td class="focus"><input id="scale" v-model="viewScale"></td>
                                        <td></td>
                                    </tr>
                                    <tr class="off"><th>Scale Value &nbsp;&nbsp; 1:</th><td>100</td><td></td></tr>
                                    <tr><th>Detail Level</th><td>Fine</td><td></td></tr>
                                    <tr><th>Parts Visibility</th><td>Show Original</td><td></td></tr>
                                    <tr><th>Visibility/Graphics O...</th><td class="btn"><button>Edit...</button></td><td></td></tr>
                                    <tr><th></th><td class="btn"><button></button></td><td></td></tr>
                                </tbody>
                            </table>
                        </div>
                        <div class="vscroll"><i class="chev up"></i><span class="track"><span class="thumb_bar"></span></span><i class="chev down"></i></div>
                    </div>
                    <footer class="props_foot">
                        <button class="on" aria-label="Group"><svg viewBox="0 0 24 24" v-html="icons.group"></svg></button>
                        <button aria-label="Sort ascending"><svg viewBox="0 0 24 24"><text x="1" y="10" class="blue">A</text><text x="1" y="24">Z</text><path d="M18 2v17" stroke="#444" stroke-width="2" /><path d="M18 24l4-6h-8z" fill="#444" /></svg></button>
                        <button aria-label="Sort descending"><svg viewBox="0 0 24 24"><text x="1" y="10">Z</text><text x="1" y="24" class="blue">A</text><path d="M18 2v17" stroke="#444" stroke-width="2" /><path d="M18 24l4-6h-8z" fill="#444" /></svg></button>
                        <button class="apply" disabled>Apply</button>
                    </footer>
                </section>

                <section class="dock browser">
                    <header class="dock_title">
                        <h2>Project Browser - Arch Demo Revit Model GBXML</h2>
                        <button class="x" aria-label="Close project browser"></button>
                    </header>
                    <div class="browser_body">
                        <label class="search">
                            <svg viewBox="0 0 24 24" v-html="icons.search"></svg>
                            <input v-model="search" type="text" placeholder="Search" aria-label="Search">
                        </label>
                        <div class="tree_wrap">
                            <ul class="tree">
                                <li class="root"><i class="minus"></i><svg viewBox="0 0 24 24" v-html="icons.views"></svg>Views (all)</li>
                                <li class="plans"><i class="rail short"></i><i class="minus"></i>Floor Plans</li>
                                <li v-for="f in floorPlans" :key="f" :class="{ selected: f === selectedPlan }" @click="selectedPlan = f">
                                    <i class="rail"></i><i class="rail branch"></i>
                                    <svg viewBox="0 0 24 24" v-html="icons.plan"></svg>{{ f }}
                                </li>
                            </ul>
                            <div class="vscroll"><i class="chev up"></i><span class="track"><span class="thumb_bar long"></span></span><i class="chev down"></i></div>
                        </div>
                    </div>
                </section>
            </aside>

            <section class="view">
                <div class="doc_tabs">
                    <button class="doc_tab">
                        <svg viewBox="0 0 24 24" v-html="icons.house"></svg>
                        <b>{3D}</b>
                        <i class="x"></i>
                    </button>
                    <button class="doc_menu" aria-label="Open views"><i class="arrow"></i></button>
                </div>
                <div class="canvas_row">
                    <div class="canvas">
                        <svg class="model" viewBox="437 291 1456 722">
                            <g v-for="l in levels" :key="l.name">
                                <path :d="`M1242 ${l.y + 5}l8 -5l8 5`" class="level" />
                                <path :d="`M1250 ${l.y}L1560 ${l.y + 179}`" class="level dash" />
                                <path :d="`M1250 ${l.y}L715 ${l.y + 309}`" class="level dash" />
                                <g :transform="`translate(1565 ${l.y + 182}) rotate(-20)`">
                                    <ellipse rx="5" ry="7" fill="#fff" stroke="#0d1d4f" />
                                    <path d="M0 0V-7A5 7 0 00-5 0zM0 0V7A5 7 0 005 0z" fill="#0d1d4f" />
                                </g>
                                <text :transform="`translate(1555 ${l.y + 171}) rotate(29)`" class="level_name">{{ l.name }}</text>
                                <text :transform="`translate(1555 ${l.y + 182}) rotate(20)`" class="level_name">{{ l.value }}</text>
                            </g>

                            <g transform="translate(920 440) scale(.33333)" class="building">
                                <!-- roof and parapets -->
                                <path d="M62 488L743 96L913 192L1090 92L1342 233L975 437L1035 465L655 628L305 832L53 690L230 592z" fill="#85827f" />
                                <path d="M53 690L58 687L305 832V1440L53 1292z" fill="#40212a" />
                                <path d="M62 490L232 592L62 682z" fill="#40212a" />
                                <path d="M62 535L198 610M53 735L305 878" fill="none" />
                                <path d="M122 507L745 150L913 245L1090 143L1285 253L975 424L940 447L305 820L105 710L253 628V588z" fill="#929094" />
                                <path d="M88 488L745 108V150L122 507z" fill="#e1dfe3" />
                                <path d="M745 108L913 205V245L745 150z" fill="#656266" />
                                <path d="M913 205L1090 105V143L913 245z" fill="#e1dfe3" />
                                <path d="M1090 105L1317 235L1285 253L1090 143z" fill="#656266" />
                                <path d="M75 690L253 588V628L105 710z" fill="#e1dfe3" />
                                <path d="M88 488L253 588M75 690L305 820L655 620" fill="none" />

                                <!-- street front -->
                                <path d="M305 832L655 628L665 640V1225L305 1440z" fill="#80444f" />
                                <path d="M305 1432L640 1240V1250L305 1443z" fill="#8e2b36" stroke-width="1" />
                                <path d="M305 878L318 872" fill="none" />
                                <path d="M665 620L985 440V1030L665 1182z" fill="#80444f" />
                                <path d="M665 1175L940 1022V1030L665 1185z" fill="#8e2b36" stroke-width="1" />
                                <path d="M975 437L1342 235V835L1318 850V858L982 1050V600L975 560z" fill="#80444f" />
                                <path d="M982 1042L1318 850V858L982 1050z" fill="#8e2b36" stroke-width="1" />
                                <path d="M940 570L985 545V1048L940 1026z" fill="#40212a" />
                                <path d="M668 700L707 720V1158L668 1178z" fill="#c89a56" />
                                <path d="M708 720V1160M666 700V1180M702 740v12M702 925v12M702 1110v12" stroke-width="6" />
                                <path d="M866 610H893V1052L866 1066z" fill="#c89a56" />
                                <path d="M896 610V1052" stroke-width="7" />
                                <path d="M778 690L858 640V1158L778 1118z" fill="#40212a" />
                                <path d="M856 640H866V1150L856 1158z" fill="#a3606a" />

                                <g v-for="s in storeys" :key="s" :transform="`translate(0 ${s})`">
                                    <path d="M718 722l40-18v12l-40 20z" fill="#111" />
                                    <path d="M722 732l34-16" class="dots" />
                                </g>
                                <g v-for="s in storeys.slice(0, 2)" :key="s" :transform="`translate(0 ${s})`">
                                    <path d="M663 814L778 748L818 768L705 834z" fill="#929094" />
                                    <path d="M866 694L942 650L985 672L866 738z" fill="#929094" />
                                </g>
                                <path d="M598 645L940 447L975 465M620 640L940 462L990 485L705 648L660 625z" fill="#929094" />
                                <path d="M785 552L825 580" fill="none" />
                                <path d="M972 437L1035 462L972 497z" fill="#40212a" />
                                <path d="M942 582V652L985 676L1030 652L990 625V560z" fill="#40212a" />
                                <path d="M942 766V836L985 860L1030 836L990 809V744z" fill="#40212a" />
                                <path d="M985 560V625L1035 650V545z" fill="#80444f" class="plain" />
                                <path d="M985 744V809L1035 834V729z" fill="#80444f" class="plain" />

                                <g v-for="s in storeys" :key="s" :transform="`translate(0 ${s})`">
                                    <path d="M655 630L705 655V730L655 704z" fill="#40212a" />
                                    <path d="M705 655L1035 465V545L705 730z" fill="#80444f" />
                                    <path d="M655 628L705 653L1035 463L985 436" class="rim_edge" />
                                    <path d="M655 628L705 653L1035 463L985 436" class="rim" />
                                </g>

                                <!-- windows with their canopies -->
                                <g v-for="s in storeys" :key="s" :transform="`translate(0 ${s})`">
                                    <g v-for="w in windows" :key="w[0]" :transform="`translate(${w[0]} ${w[1]})`">
                                        <path d="M0 0L36 -18V20L0 40z" fill="#0c0c0e" />
                                        <path d="M9 1L28 -8V12L9 20z" :fill="w[2]" class="plain" />
                                        <path d="M4 32L34 17" class="dots" />
                                    </g>
                                    <path v-for="a in awnings" :key="a[0]" :d="`M${a[0]} ${a[1]}l${a[2]} ${-a[3]}l18 9v8l${-a[2]} ${a[3]}l-18 -4z`" fill="#84817e" />
                                    <g v-for="w in sideWindows" :key="w[0]" :transform="`translate(${w[0]} ${w[1]})`">
                                        <path d="M0 0L36 20V60L0 40z" fill="#0c0c0e" />
                                        <path d="M12 10L32 21V44L12 33z" fill="#dfe3e6" class="plain" />
                                        <path d="M4 36L34 53" class="dots" />
                                        <path d="M-27 -20L-12 -27L40 3L36 14L-24 -14z" fill="#84817e" />
                                    </g>
                                </g>
                                <path d="M1342 235V835M305 832V1440M53 690V1292" fill="none" />
                                <path d="M53 1292L75 1305V1312L305 1443" fill="none" />
                            </g>

                            <path d="M1363 829v31l7-7 6 13q4 3 7 0 1-2-1-5l-5-9h11z" class="cursor" />
                        </svg>

                        <svg class="cube" viewBox="0 0 400 330">
                            <defs>
                                <radialGradient id="shade"><stop offset=".5" stop-color="#aaa9ae" /><stop offset="1" stop-color="#fff" stop-opacity="0" /></radialGradient>
                            </defs>
                            <ellipse cx="198" cy="195" rx="196" ry="128" class="ring" />
                            <ellipse cx="198" cy="190" rx="150" ry="96" class="ring inner" />
                            <ellipse cx="198" cy="190" rx="128" ry="66" fill="url(#shade)" />
                            <g class="compass">
                                <path d="M26 262l34-16 32 22-34 22zM302 266l34-20 36 24-34 20zM58 108l36-14v30zM344 108l-40-14v30z" />
                                <text x="52" y="278" transform="rotate(20 60 268)">E</text>
                                <text x="326" y="276" transform="rotate(-25 336 268)">N</text>
                            </g>
                            <path d="M92 52L198 0L304 52L198 112z" class="face" />
                            <path d="M92 52L198 112V236L100 172z" class="face left" />
                            <path d="M198 112L304 52L298 172L198 236z" class="face" />
                            <text x="200" y="62" transform="rotate(155 200 54)" class="top">TOP</text>
                            <text x="146" y="152" transform="rotate(25 146 144)">RIGHT</text>
                            <text x="252" y="152" transform="rotate(-24 252 144)">BACK</text>
                        </svg>

                        <div class="navbar">
                            <button class="tiny" aria-label="Close navigation bar"><svg viewBox="0 0 12 12"><circle cx="6" cy="6" r="5" fill="#b5b4b9" /><path d="M4 4l4 4m0-4L4 8" stroke="#fff" stroke-width="1.500" /></svg></button>
                            <button class="wheel" aria-label="Steering wheel">
                                <svg viewBox="0 0 34 34"><path d="M17 1h15v16A15.500 15.500 0 1117 1z" fill="#f1f0f3" stroke="#98979c" stroke-width="1.600" /><circle cx="17" cy="18" r="9" fill="#eceaee" stroke="#98979c" stroke-width="1.600" /><path d="M10 25l-4 4M24 25l4 4" stroke="#98979c" /></svg>
                            </button>
                            <i class="arrow grey"></i>
                            <hr>
                            <button class="zoom" aria-label="Zoom">
                                <svg viewBox="0 0 26 26"><path d="M1 1h16v17H1z" fill="#b7cfa5" stroke="#92b07e" /><circle cx="17" cy="17" r="6" fill="#f7f6f9" stroke="#8e8d92" stroke-width="2" /><path d="M21 21l4 4" stroke="#8e8d92" stroke-width="3" /></svg>
                            </button>
                            <i class="arrow grey"></i>
                            <button class="tiny" aria-label="Navigation options"><svg viewBox="0 0 12 12"><circle cx="6" cy="6" r="5" fill="#b5b4b9" /><path d="M3 5h6M3 7h6" stroke="#fff" /></svg></button>
                        </div>
                    </div>
                    <div class="vscroll main_scroll"><i class="chev up"></i><span class="track"><span class="thumb_bar mid"></span></span><i class="chev down"></i></div>
                </div>
                <div class="view_bar">
                    <span class="view_scale">1 : 100</span>
                    <button v-for="(v, i) in viewControls" :key="i" :aria-label="v[0]"><svg viewBox="0 0 24 24" v-html="draw(v)"></svg></button>
                    <div class="hscroll">
                        <i class="chev left"></i>
                        <span class="track"><span class="thumb_bar"></span></span>
                        <i class="chev right"></i>
                    </div>
                    <svg class="grip" viewBox="0 0 12 12"><path d="M7 0h3v3H7zM1 7h3v3H1zM7 7h3v3H7z" fill="#88878c" /></svg>
                </div>
            </section>
        </main>

        <footer class="status">
            <p>Click to select, TAB for alternates, CTRL adds, SHIFT unselect</p>
            <button aria-label="Worksets"><svg viewBox="0 0 24 24" v-html="icons.worksets"></svg></button>
            <label class="combo workset">
                <select aria-label="Active workset" disabled><option></option></select>
                <i class="chev down"></i>
            </label>
            <button class="count off" aria-label="Editing requests"><svg viewBox="0 0 24 24" v-html="icons.requests"></svg>:0</button>
            <button class="opts" aria-label="Design options"><svg viewBox="0 0 24 24" v-html="icons.list"></svg></button>
            <button class="opts" aria-label="Add to set"><svg viewBox="0 0 24 24" v-html="icons.listOff"></svg></button>
            <label class="combo option">
                <select aria-label="Design option" disabled><option>Main Model</option></select>
                <i class="chev down"></i>
            </label>
            <div class="selection">
                <button v-for="(s, i) in selectionTools" :key="i" :aria-label="s[0]"><svg viewBox="0 0 24 24" v-html="draw(s)"></svg></button>
                <span>:0</span>
            </div>
        </footer>
    </div>
</template>

<style>
body {
    background: #f6f4f9;
}
</style>

<style scoped>
.app {
    display: flex;
    flex-direction: column;
    height: 100vh;
    overflow: hidden;
    font-family: "Open Sans", "Noto Sans", sans-serif;
    font-size: 17px;
    line-height: 24px;
    color: #3b3a3f;
    background: #f6f4f9;
}

*,
*::before,
*::after {
    box-sizing: border-box;
}

button,
input,
select {
    font: inherit;
    color: inherit;
    background: none;
    border: 0;
    padding: 0;
    margin: 0;
    appearance: none;
}

h1,
h2,
h3,
p,
ul {
    margin: 0;
    padding: 0;
    font-size: 17px;
    font-weight: 400;
    list-style: none;
    white-space: nowrap;
}

svg {
    display: block;
    flex: none;
    overflow: visible;
}

.arrow {
    flex: none;
    display: inline-block;
    width: 0;
    height: 0;
    border: 4px solid transparent;
    border-top: 5px solid #2c2c30;
    border-bottom: 0;
}
.arrow.wide {
    border-width: 7px 6px 0;
    margin-left: 6px;
    vertical-align: 3px;
}
.arrow.up {
    border-top: 0;
    border-bottom: 5px solid #2c2c30;
}
.arrow.left {
    border: 6px solid transparent;
    border-left: 0;
    border-right: 6px solid #2c2c30;
}
.arrow.grey {
    border-top-color: #88878c;
}

/* title bar */
.titlebar {
    display: flex;
    align-items: flex-start;
    height: 43px;
    flex: none;
    background: #dbd9dd;
}
.quick {
    display: flex;
    align-items: center;
    width: 934px;
    height: 40px;
}
.logo {
    width: 36px;
    padding-left: 4px;
}
.logo svg {
    width: 32px;
    height: 32px;
}
.logo text {
    font: bold 19px "Open Sans", sans-serif;
    fill: #fff;
}
.tool {
    display: flex;
    justify-content: center;
    width: 36px;
}
.tool.first {
    width: 45px;
    padding-right: 7px;
}
.tool svg,
.user svg {
    width: 24px;
    height: 24px;
}
.drop {
    width: 18px;
    display: flex;
    justify-content: center;
}
.sep {
    width: 2px;
    height: 32px;
    margin: 0 4px;
    background: #b9b8bd;
}
.titlebar h1 {
    flex: 1;
    line-height: 32px;
}
.account {
    display: flex;
    align-items: center;
    height: 40px;
    width: 400px;
}
.account .tool {
    width: 50px;
}
.user {
    display: flex;
    align-items: center;
    gap: 8px;
    width: 166px;
}
.user .arrow {
    margin-left: auto;
}
.account .cart {
    width: 60px;
}
.account .thin {
    width: 1px;
    margin: 0;
}
.account .help {
    width: 48px;
    padding-right: 2px;
}
.wincontrols {
    display: flex;
    align-items: center;
    justify-content: space-between;
    height: 40px;
    width: 133px;
    padding: 0 9px 0 29px;
}
.wincontrols svg {
    width: 20px;
    height: 20px;
}

/* ribbon tabs */
.tabs {
    display: flex;
    flex: none;
    height: 30px;
    padding-left: 2px;
    background: #dbd9dd;
}
.tabs button {
    flex: none;
    padding-top: 1px;
    white-space: nowrap;
}
.tabs .file {
    width: 68px;
    margin-right: 6px;
    color: #fff;
    background: #2f7bb3;
}
.tabs .active {
    width: 121px;
    margin-right: 4px;
    background: #f7f5fa;
}
.tabs .collapse {
    display: flex;
    align-items: center;
    gap: 6px;
    padding: 0 31px;
}
.collapse .box {
    display: flex;
    align-items: center;
    justify-content: center;
    width: 22px;
    height: 13px;
    border: 2px solid #66656b;
    border-radius: 4px;
}

/* ribbon */
.ribbon {
    display: flex;
    flex: none;
    height: 146px;
    background: #f7f5fa;
    border-bottom: 2px solid #d9d7dc;
}
.panel {
    display: flex;
    flex-direction: column;
    flex: none;
    padding-top: 5px;
    border-right: 1px solid #dddbe0;
}
.panel.last {
    border-right: 0;
}
.panel_body {
    display: grid;
    flex: none;
    height: 117px;
    padding: 3px 0;
}
.panel_name {
    text-align: center;
    line-height: 22px;
    padding-left: 1px;
}
.select {
    width: 87px;
}
.select .panel_body {
    padding: 2px 9px 7px 11px;
}
.select .panel_name {
    padding-left: 3px;
}
.big {
    display: flex;
    flex-direction: column;
    align-items: center;
    padding-top: 5px;
}
.big svg {
    width: 44px;
    height: 48px;
    margin-bottom: 5px;
}
.big span {
    line-height: 25px;
}
.panel:not(.select) .big span {
    max-width: 50px;
}
.big .arrow {
    margin-top: 4px;
}
.modify {
    border: 1px solid #79b9e6;
    background: #e0ecf9;
}
.col {
    display: flex;
    flex-direction: column;
    justify-content: center;
}
.col:first-child {
    padding-left: 12px;
}
.big + .col {
    padding-left: 8px;
}
.col button {
    display: flex;
    align-items: center;
    height: 36px;
    white-space: pre;
}
.col svg {
    width: 24px;
    height: 24px;
    margin-right: 7px;
}
.col .arrow {
    margin-left: 12px;
    margin-bottom: 3px;
}
.col button:disabled {
    color: #cbc9cf;
}
.options {
    flex: none;
    height: 39px;
    background: #f7f5fa;
}

/* docked panels */
main {
    display: flex;
    flex: 1;
    min-height: 0;
    border-top: 3px solid #bcbabf;
}
aside {
    display: flex;
    flex-direction: column;
    flex: none;
    width: 437px;
    background: #f3f1f5;
    border-right: 3px solid #bcbabf;
}
.dock_title {
    display: flex;
    align-items: center;
    justify-content: space-between;
    flex: none;
    height: 26px;
    padding: 0 4px;
    background: #dad8dc;
}
.x {
    flex: none;
    width: 16px;
    height: 14px;
    background:
        linear-gradient(42deg, transparent 42%, #77767b 42% 58%, transparent 58%),
        linear-gradient(-42deg, transparent 42%, #77767b 42% 58%, transparent 58%);
}
.type {
    display: flex;
    align-items: center;
    width: 426px;
    height: 105px;
    margin: 1px 4px 0;
    padding: 0 9px 0 3px;
    border: 2px solid #bcbabf;
    border-bottom: 0;
    background: #f7f5fa;
}
.type .thumb {
    display: flex;
    align-items: center;
    justify-content: center;
    width: 99px;
    height: 99px;
    margin-right: 6px;
    border: 2px solid #bcbabf;
}
.thumb svg {
    width: 46px;
    height: 46px;
}
.type .arrow {
    margin-left: auto;
    border-width: 6px 6px 0;
}
.filter_row {
    display: flex;
    align-items: center;
    height: 40px;
    padding: 0 6px 4px 3px;
}
.combo {
    display: flex;
    align-items: center;
    height: 34px;
    padding: 0 10px 0 5px;
    border-bottom: 2px solid #cfcdd2;
}
.filter_row .combo {
    width: 322px;
}
.combo select {
    flex: 1;
    opacity: 1;
}
.edit_type {
    display: flex;
    align-items: center;
    gap: 3px;
    margin-left: 5px;
    white-space: nowrap;
}
.edit_type svg {
    width: 18px;
    height: 18px;
}
.chev {
    flex: none;
    width: 9px;
    height: 9px;
    border: solid #88878c;
    border-width: 2px 2px 0 0;
    transform: rotate(-45deg);
}
.chev.down {
    transform: rotate(135deg);
}
.chev.left {
    transform: rotate(-135deg);
}
.chev.right {
    transform: rotate(45deg);
}
.props {
    display: flex;
    height: 182px;
    padding: 0 3px;
}
.props_list {
    flex: 1;
    overflow: hidden;
}
h3 {
    display: flex;
    justify-content: space-between;
    height: 29px;
    padding: 4px 6px 0 2px;
}
h3 svg {
    width: 8px;
    height: 9px;
}
table {
    width: 100%;
    border-collapse: collapse;
    table-layout: fixed;
    background: #fff;
}
tr {
    height: 30px;
}
th,
td {
    padding: 0 0 0 3px;
    height: 30px;
    font-weight: 400;
    text-align: left;
    white-space: nowrap;
    border-bottom: 1px dotted #dcdadf;
    border-right: 1px dotted #dcdadf;
}
th {
    width: 191px;
    padding-left: 12px;
}
td:last-child {
    width: 19px;
}
.off {
    color: #a5a3a9;
}
td.focus,
td.btn {
    padding: 0;
}
td input {
    width: 100%;
    height: 29px;
    padding: 0 7px;
    border: 1px solid #111;
}
td button {
    display: block;
    width: 189px;
    height: 27px;
    margin: 0 1px;
    background: #f7f5fa;
    border: 1px solid #b5b3b8;
}
.vscroll {
    display: flex;
    flex-direction: column;
    align-items: center;
    flex: none;
    width: 26px;
    padding: 10px 0 9px;
    background: #ebe9ed;
}
.vscroll .track {
    display: flex;
    justify-content: center;
    flex: 1;
    width: 100%;
    margin: 6px 0 8px;
    border: solid #d8d6db;
    border-width: 1px 0;
}
.thumb_bar {
    width: 8px;
    height: 22px;
    background: #d4d2d7;
    border-radius: 4px;
}
.thumb_bar.long {
    height: 58px;
    margin-top: 9px;
}
.thumb_bar.mid {
    align-self: center;
    height: 26px;
}
.props_foot {
    display: flex;
    align-items: center;
    gap: 5px;
    height: 36px;
    padding: 0 7px 0 5px;
}
.props_foot button {
    display: flex;
    align-items: center;
    justify-content: center;
    width: 31px;
    height: 32px;
    border-radius: 4px;
    background: #f8f6fa;
}
.props_foot svg {
    width: 22px;
    height: 22px;
}
.props_foot text {
    font: bold 12px "Liberation Sans", sans-serif;
    fill: #55545a;
}
.props_foot .blue {
    fill: #3e97d9;
}
.props_foot .on {
    background: #93cdec;
}
.props_foot .apply {
    width: 108px;
    height: 28px;
    margin-left: auto;
    color: #a5a3a9;
    background: none;
    border: 1px solid #dcdadf;
}
.browser {
    display: flex;
    flex-direction: column;
    flex: 1;
    min-height: 0;
    border-top: 3px solid #bcbabf;
}
.browser_body {
    display: flex;
    flex-direction: column;
    flex: 1;
    min-height: 0;
    margin: 0 3px 3px;
    background: #fff;
}
.search {
    display: flex;
    align-items: center;
    flex: none;
    height: 38px;
    margin: 13px 12px 12px;
    padding: 0 12px;
    border: 1px solid #e4e2e7;
}
.search svg {
    width: 24px;
    height: 24px;
    margin-right: 12px;
}
.search input {
    flex: 1;
    min-width: 0;
    outline: 0;
}
.search input::placeholder {
    color: #aaa8ae;
    opacity: 1;
}
.tree_wrap {
    display: flex;
    flex: 1;
    min-height: 0;
}
.tree {
    flex: 1;
    overflow: hidden;
}
.tree li {
    display: flex;
    align-items: center;
    height: 30px;
    padding-left: 12px;
    color: #5a585e;
}
.tree svg {
    width: 24px;
    height: 24px;
    margin-right: 6px;
}
.tree .root {
    padding-left: 7px;
}
.root svg {
    margin-left: 13px;
}
.plans .minus {
    margin: 0 13px 0 6px;
}
.minus {
    width: 12px;
    height: 3px;
    background: #88878c;
}
.rail {
    display: flex;
    align-items: center;
    flex: none;
    width: 24px;
    height: 30px;
    border-left: 1px dashed #c5c3c8;
}
.rail.short {
    width: 13px;
}
.rail.branch {
    width: 44px;
}
.rail.short::after,
.rail.branch::after {
    content: "";
    width: 36px;
    border-top: 1px dashed #c5c3c8;
}
.tree li:last-child .branch {
    border-left-color: transparent;
}
.tree li:last-child .branch::before {
    content: "";
    align-self: flex-start;
    height: 15px;
    border-left: 1px dashed #c5c3c8;
}
.selected {
    background: #f3f1f5;
    box-shadow: inset 0 0 0 1px #e6e4e9;
}

/* drawing area */
.view {
    display: flex;
    flex-direction: column;
    flex: 1;
    min-width: 0;
    background: #fff;
}
.doc_tabs {
    display: flex;
    justify-content: space-between;
    flex: none;
    height: 30px;
    background: #cdcbcf;
}
.doc_tab {
    display: flex;
    align-items: center;
    width: 192px;
    padding: 2px 7px 0;
    background: #fff;
}
.doc_tab svg {
    width: 23px;
    height: 23px;
    margin-right: 13px;
}
.doc_tab .x {
    margin-left: auto;
}
.doc_menu {
    width: 14px;
    height: 12px;
    margin: 10px 6px;
    display: flex;
    justify-content: center;
    padding-top: 2px;
    border-top: 2px solid #66656b;
}
.doc_menu .arrow {
    border-width: 6px 6px 0;
    border-top-color: #66656b;
}
.canvas_row {
    display: flex;
    flex: 1;
    min-height: 0;
}
.canvas {
    position: relative;
    flex: 1;
    min-width: 0;
}
.model {
    width: 100%;
    height: 100%;
}
.level {
    fill: none;
    stroke: #111;
    stroke-width: 1;
    shape-rendering: crispEdges;
}
.level.dash {
    stroke-dasharray: 17 11 8 10;
    stroke-dashoffset: -9;
}
.level_name {
    font: 7px "Liberation Sans", sans-serif;
    fill: #222;
    text-anchor: end;
}
.building path {
    stroke: #0c0a0b;
    stroke-width: 3;
    shape-rendering: crispEdges;
}
.building .plain {
    stroke: none;
}
.building .dots {
    fill: none;
    stroke: #dedee2;
    stroke-dasharray: 3 5;
}
.building .rim_edge {
    fill: none;
    stroke-width: 10;
}
.building .rim {
    fill: none;
    stroke: #c0727c;
    stroke-width: 5;
}
.cursor {
    fill: #f6f5f8;
    stroke: #1c1c1e;
    stroke-width: 2;
    stroke-linejoin: round;
}
.cube {
    position: absolute;
    top: 57px;
    right: 25px;
    width: 133px;
    height: 110px;
}
.cube .ring {
    fill: #f3f2f5;
    stroke: #c5c4c9;
    stroke-width: 3;
    stroke-dasharray: 5 4;
}
.cube .inner {
    fill: #fff;
}
.cube .face {
    fill: #eeedf0;
    stroke: #a3a2a7;
    stroke-width: 3;
}
.cube .left {
    fill: #e6e5e9;
}
.cube text {
    font: bold 25px "Liberation Sans", sans-serif;
    fill: #99989d;
    text-anchor: middle;
}
.compass path {
    fill: #dcdbdf;
    stroke: #b5b4b9;
    stroke-width: 3;
}
.cube .compass text {
    font-size: 28px;
    text-anchor: start;
}
.navbar {
    position: absolute;
    top: 176px;
    right: 0;
    display: flex;
    flex-direction: column;
    align-items: center;
    width: 50px;
    height: 168px;
    background: #f7f5fa;
    border: 2px solid #c5c3c8;
    border-radius: 5px;
}
.navbar .tiny {
    align-self: flex-end;
    margin: 2px 3px;
}
.tiny svg {
    width: 12px;
    height: 12px;
}
.wheel svg {
    width: 34px;
    height: 34px;
    margin: 9px 0 11px;
}
.navbar hr {
    width: 40px;
    margin: 7px 0 12px;
    border: 0;
    border-top: 1px solid #c5c3c8;
}
.zoom svg {
    width: 26px;
    height: 26px;
    margin-bottom: 14px;
}
.navbar .arrow + .tiny {
    margin-top: auto;
}
.main_scroll {
    margin-top: 3px;
    margin-right: 1px;
}
.view_bar {
    display: flex;
    align-items: center;
    flex: none;
    height: 27px;
    margin-bottom: 3px;
    background: #f6f4f9;
}
.view_scale {
    width: 120px;
    padding-left: 38px;
}
.view_bar button {
    display: flex;
    justify-content: center;
    width: 38px;
}
.view_bar button svg {
    width: 24px;
    height: 24px;
}
.hscroll {
    display: flex;
    align-items: center;
    flex: 1;
    height: 27px;
    padding: 0 10px;
    background: #ebe9ed;
}
.hscroll .track {
    display: flex;
    align-items: center;
    justify-content: center;
    flex: 1;
    height: 27px;
    margin: 0 8px;
    border: solid #d8d6db;
    border-width: 0 1px;
}
.hscroll .thumb_bar {
    width: 26px;
    height: 8px;
}
.grip {
    width: 27px;
    height: 12px;
    background: #f6f4f9;
}

/* status bar */
.status {
    display: flex;
    align-items: center;
    flex: none;
    height: 37px;
    padding-top: 3px;
    border-bottom: 1px solid #d5d3d8;
}
.status p {
    flex: none;
    width: 478px;
    padding-left: 1px;
}
.status svg {
    width: 24px;
    height: 24px;
}
.workset {
    width: 312px;
    margin: 0 6px 0 8px;
}
.status .chev {
    border-color: #bbbabf;
}
.status .combo {
    height: 32px;
    border-width: 1px;
}
.status .off,
.option {
    color: #a5a3a9;
}
.count {
    display: flex;
    align-items: center;
    width: 60px;
}
.opts {
    margin-left: 5px;
    margin-right: 6px;
}
.option {
    width: 315px;
    padding-left: 3px;
}
.option select {
    padding-left: 5px;
}
.selection {
    display: flex;
    align-items: center;
    margin-left: auto;
    padding-right: 70px;
}
.selection button {
    width: 35px;
}
.selection span {
    margin-left: -8px;
}
</style>
